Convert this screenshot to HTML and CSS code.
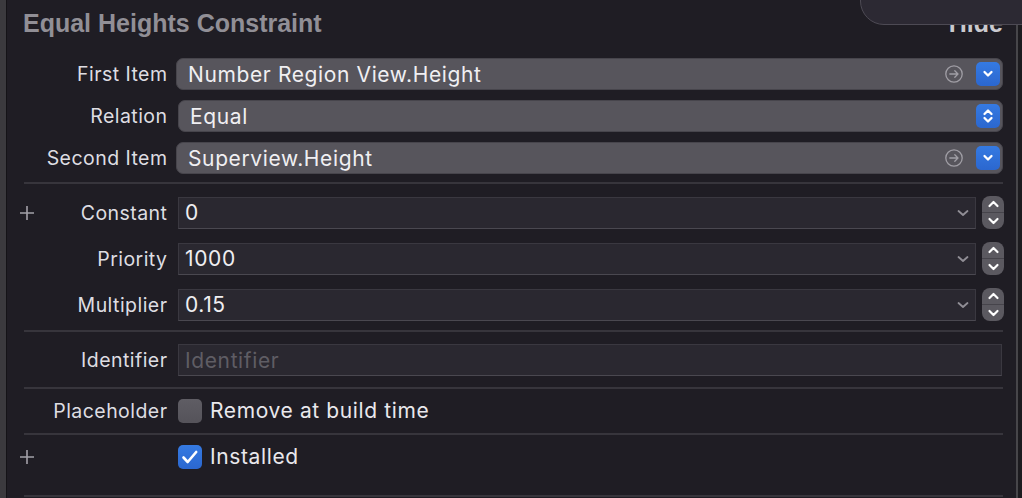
FILE: index.html
```html
<!DOCTYPE html>
<html lang="en">
<head>
<meta charset="utf-8">
<title>Equal Heights Constraint</title>
<link rel="stylesheet" href="styles.css">
</head>
<body>
<div class="app">
  <div class="gutter"></div>
  <main class="panel">
    <header class="head">
      <h1 class="title">Equal Heights Constraint</h1>
      <span class="hide">Hide</span>
    </header>

    <section class="sec sec-items">
      <div class="row">
        <span class="lbl">First Item</span>
        <div class="popup">
          <span class="pv">Number Region View.Height</span>
          <svg class="go" viewBox="0 0 18 18"><circle cx="9" cy="9" r="8.2"/><path d="M4.8 9h8M9.8 5.8l3.2 3.2-3.2 3.2"/></svg>
          <span class="blue"><svg viewBox="0 0 12 8" class="bchev"><path d="M2.5 2l3.5 3.5 3.5-3.5"/></svg></span>
        </div>
      </div>
      <div class="row">
        <span class="lbl">Relation</span>
        <div class="popup popup-rel">
          <span class="pv">Equal</span>
          <span class="blue"><svg viewBox="0 0 12 18" class="bud"><path d="M2.5 7l3.5-3.5 3.5 3.5M2.5 11l3.5 3.5 3.5-3.5"/></svg></span>
        </div>
      </div>
      <div class="row">
        <span class="lbl">Second Item</span>
        <div class="popup">
          <span class="pv">Superview.Height</span>
          <svg class="go" viewBox="0 0 18 18"><circle cx="9" cy="9" r="8.2"/><path d="M4.8 9h8M9.8 5.8l3.2 3.2-3.2 3.2"/></svg>
          <span class="blue"><svg viewBox="0 0 12 8" class="bchev"><path d="M2.5 2l3.5 3.5 3.5-3.5"/></svg></span>
        </div>
      </div>
    </section>

    <section class="sec sec-values">
      <div class="row">
        <span class="lbl"><svg class="plus" viewBox="0 0 14 14"><path d="M7 0v14M0 7h14"/></svg>Constant</span>
        <div class="ctl">
          <div class="field"><span class="fv">0</span><svg class="fchev" viewBox="0 0 12 8"><path d="M1.5 2l4.5 4 4.5-4"/></svg></div>
          <div class="stepper"><span class="half up"><svg viewBox="0 0 12 8"><path d="M2 6l4-4 4 4"/></svg></span><span class="half"><svg viewBox="0 0 12 8"><path d="M2 2l4 4 4-4"/></svg></span></div>
        </div>
      </div>
      <div class="row">
        <span class="lbl">Priority</span>
        <div class="ctl">
          <div class="field"><span class="fv">1000</span><svg class="fchev" viewBox="0 0 12 8"><path d="M1.5 2l4.5 4 4.5-4"/></svg></div>
          <div class="stepper"><span class="half up"><svg viewBox="0 0 12 8"><path d="M2 6l4-4 4 4"/></svg></span><span class="half"><svg viewBox="0 0 12 8"><path d="M2 2l4 4 4-4"/></svg></span></div>
        </div>
      </div>
      <div class="row">
        <span class="lbl">Multiplier</span>
        <div class="ctl">
          <div class="field"><span class="fv">0.15</span><svg class="fchev" viewBox="0 0 12 8"><path d="M1.5 2l4.5 4 4.5-4"/></svg></div>
          <div class="stepper"><span class="half up"><svg viewBox="0 0 12 8"><path d="M2 6l4-4 4 4"/></svg></span><span class="half"><svg viewBox="0 0 12 8"><path d="M2 2l4 4 4-4"/></svg></span></div>
        </div>
      </div>
    </section>

    <section class="sec sec-ident">
      <div class="row">
        <span class="lbl">Identifier</span>
        <div class="field field-id"><span class="ph">Identifier</span></div>
      </div>
    </section>

    <section class="sec sec-check">
      <div class="row row-cb">
        <span class="lbl">Placeholder</span>
        <div class="check"><span class="cb"></span><span class="ct">Remove at build time</span></div>
      </div>
    </section>

    <section class="sec sec-inst">
      <div class="row row-cb">
        <span class="lbl"><svg class="plus" viewBox="0 0 14 14"><path d="M7 0v14M0 7h14"/></svg></span>
        <div class="check"><span class="cb on"><svg viewBox="0 0 24 24"><path d="M5.5 12.5l4.2 4.5 8.5-10"/></svg></span><span class="ct">Installed</span></div>
      </div>
    </section>
  </main>
  <div class="edge"></div>
</div>
<div class="overlay"></div>
</body>
</html>
```
FILE: styles.css
```css
html, body {
  margin: 0;
  padding: 0;
}
body {
  width: 1022px;
  height: 498px;
  overflow: hidden;
  position: relative;
  background: #1f1d24;
  font-family: Inter, "Liberation Sans", Arial, sans-serif;
  font-size: 19px;
}
.app {
  display: flex;
  height: 498px;
}
.gutter {
  flex: none;
  width: 6px;
  background: #3b3a3e;
  border-right: 1px solid #141317;
}
.panel {
  flex: 1;
  min-width: 0;
  padding: 0 13px 0 17px;
}
.edge {
  flex: none;
  width: 4px;
  border-left: 2px solid #47464a;
  background: #1c1b1f;
}

/* header */
.head {
  display: flex;
  justify-content: space-between;
  align-items: baseline;
  padding-top: 8px;
  height: 30px;
  margin-left: -1px;
}
.title {
  margin: 0;
  font: 700 25px/30px "Liberation Sans", Arial, sans-serif;
  color: #918f96;
}
.hide {
  font: 700 25px/30px "Liberation Sans", Arial, sans-serif;
  color: #cac9ce;
}
.overlay {
  position: absolute;
  left: 860px;
  top: -40px;
  right: -4px;
  height: 63px;
  background: #2c2933;
  border: 1px solid #4d4a54;
  border-radius: 0 0 0 24px;
}

/* sections */
.sec {
  display: grid;
  border-bottom: 2px solid #37353c;
}
.sec-items {
  padding: 20px 0 8px;
  row-gap: 10px;
}
.sec-values {
  padding: 12px 0 10px;
  row-gap: 14px;
}
.sec-ident {
  padding: 12px 0 11px;
}
.sec-check {
  padding: 9px 0 11px;
}
.sec-inst {
  padding: 9px 0 27px;
}

.row {
  display: grid;
  grid-template-columns: 143px 1fr;
  column-gap: 9px;
  align-items: center;
  height: 32px;
}
.row-cb {
  height: 24px;
}
.lbl {
  position: relative;
  text-align: right;
  color: #dedde2;
  white-space: nowrap;
  font-size: 19.5px;
  letter-spacing: 0.45px;
  margin-right: -0.45px;
}
.plus {
  position: absolute;
  left: -4px;
  top: 50%;
  width: 14px;
  height: 14px;
  margin-top: -7px;
  fill: none;
  stroke: #a3a1a8;
  stroke-width: 1.6;
}

/* values share one type style */
.pv, .fv, .ph, .ct {
  font-size: 21px;
  letter-spacing: 0.62px;
  white-space: nowrap;
}

/* popups */
.popup {
  height: 32px;
  box-sizing: border-box;
  display: flex;
  align-items: center;
  padding: 0 2px 0 11px;
  border-radius: 7px;
  background: #57555c;
  border: 1px solid #47454c;
}
.popup-rel {
  margin-left: 2px;
}
.pv {
  flex: 1;
  color: #f0eff2;
}
.go {
  width: 18px;
  height: 18px;
  margin-right: 13px;
  fill: none;
  stroke: #a09ea5;
  stroke-width: 1.3;
  stroke-linecap: round;
  stroke-linejoin: round;
}
.blue {
  width: 24px;
  height: 24px;
  border-radius: 5px;
  background: linear-gradient(#357ae2, #2b67cf);
  display: flex;
  align-items: center;
  justify-content: center;
}
.blue svg {
  fill: none;
  stroke: #fff;
  stroke-width: 2.3;
  stroke-linecap: round;
  stroke-linejoin: round;
}
.bchev {
  width: 12px;
  height: 8px;
}
.bud {
  width: 12px;
  height: 18px;
}

/* text fields */
.ctl {
  display: flex;
  align-items: center;
  gap: 6px;
  margin-left: 2px;
  margin-right: -1px;
}
.field {
  flex: 1;
  height: 32px;
  box-sizing: border-box;
  display: flex;
  align-items: center;
  padding: 0 6px;
  background: #2a2830;
  border: 1px solid #3a3840;
  border-bottom-color: #4a4850;
}
.fv {
  flex: 1;
  color: #efeef1;
}
.fchev {
  width: 12px;
  height: 8px;
  fill: none;
  stroke: #908e95;
  stroke-width: 1.8;
  stroke-linecap: round;
  stroke-linejoin: round;
}
.stepper {
  width: 22px;
  height: 33px;
  border-radius: 8px;
  background: #5b5960;
  display: flex;
  flex-direction: column;
  overflow: hidden;
}
.half {
  flex: 1;
  display: flex;
  align-items: center;
  justify-content: center;
}
.half.up {
  border-bottom: 1px solid #46444b;
}
.half svg {
  width: 13px;
  height: 8px;
  fill: none;
  stroke: #fff;
  stroke-width: 2.2;
  stroke-linecap: round;
  stroke-linejoin: round;
}
.field-id {
  margin-left: 2px;
  margin-right: 1px;
}
.ph {
  color: #5f5d64;
}

/* checkboxes */
.check {
  display: flex;
  align-items: center;
  gap: 8px;
  margin-left: 2px;
}
.cb {
  width: 24px;
  height: 24px;
  box-sizing: border-box;
  border-radius: 5px;
  background: linear-gradient(#5f5d64, #55535a);
  display: flex;
  align-items: center;
  justify-content: center;
}
.cb.on {
  background: linear-gradient(#357ae2, #2b67cf);
}
.cb svg {
  width: 24px;
  height: 24px;
  fill: none;
  stroke: #fff;
  stroke-width: 2.6;
  stroke-linecap: round;
  stroke-linejoin: round;
}
.ct {
  color: #e9e8ec;
}
```
